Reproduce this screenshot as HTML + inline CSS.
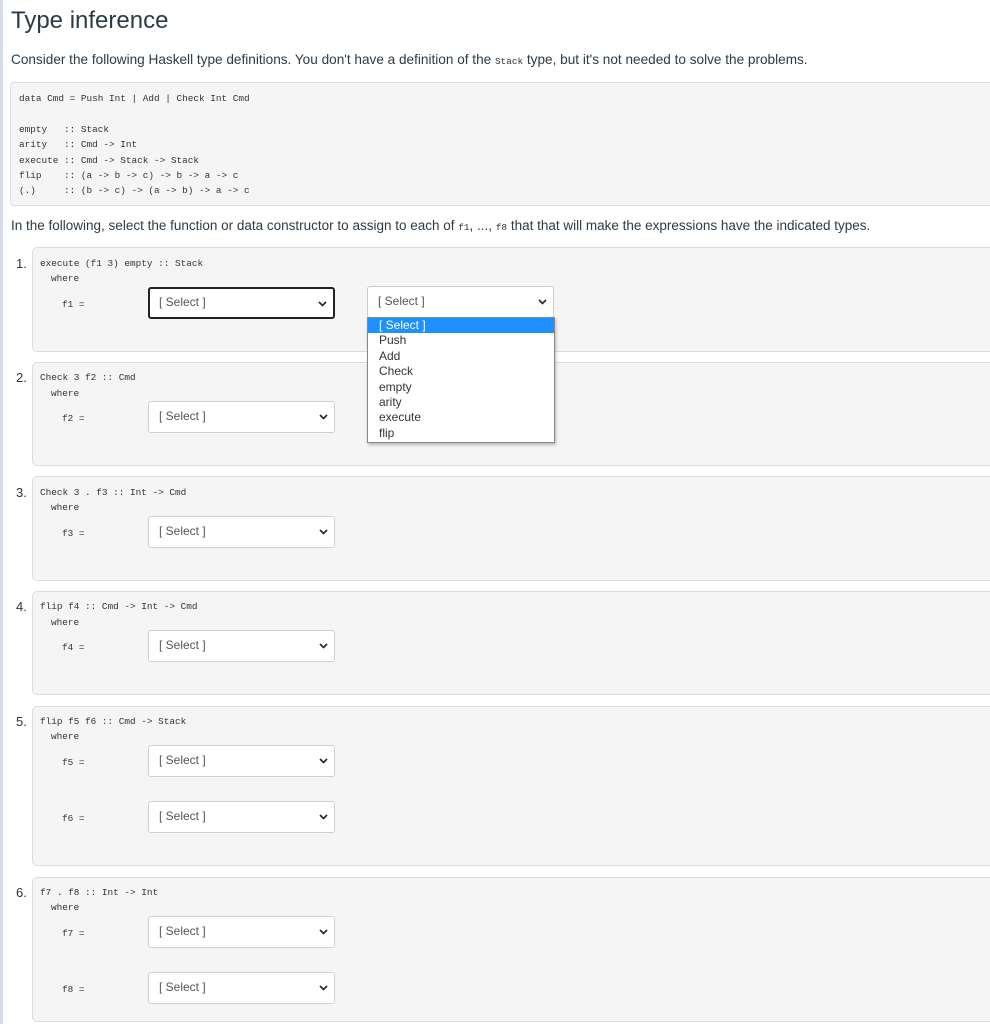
<!DOCTYPE html>
<html><head><meta charset="utf-8"><style>
*{margin:0;padding:0;box-sizing:border-box}
body{width:990px;height:1024px;background:#fff;position:relative;overflow:hidden;font-family:"Liberation Sans",sans-serif;color:#2d3b45}
.a{position:absolute;white-space:pre}
.bar{position:absolute;left:0;top:0;width:3px;height:1024px;background:#d3dae8}
.m{font-family:"Liberation Mono",monospace;font-size:9.4px;color:#333}
.box{position:absolute;left:32px;width:970px;background:#f5f5f5;border:1px solid #dcdcdc;border-radius:5px}
.sel{position:absolute;width:187px;height:32px;background:#fff;border:1px solid #d0d0d0;border-radius:3px;font-size:12px;color:#555;padding:7px 10px}
.sel svg{position:absolute;right:6px;top:12px}
.num{position:absolute;left:16px;font-size:13px;color:#333}
.dd{position:absolute;left:367px;top:317px;width:188px;height:126px;background:#fff;border:1px solid #888;box-shadow:1px 2px 3px rgba(0,0,0,.25);font-size:12px;color:#333}
.dd div{height:15.4px;line-height:15px;padding-left:11px}
</style></head><body>
<div class="bar"></div>
<div class="a" style="left:11px;top:7px;font-size:24px;color:#2d3b45">Type inference</div>
<div class="a" style="left:11px;top:52px;font-size:13.6px">Consider the following Haskell type definitions. You don't have a definition of the <span class="m">Stack</span> type, but it's not needed to solve the problems.</div>
<div style="position:absolute;left:10px;top:82px;width:990px;height:124px;background:#f5f5f5;border:1px solid #dcdcdc;border-radius:4px"></div>
<div class="a m" style="left:19px;top:91px;line-height:15.4px">data Cmd = Push Int | Add | Check Int Cmd

empty   :: Stack
arity   :: Cmd -> Int
execute :: Cmd -> Stack -> Stack
flip    :: (a -> b -> c) -> b -> a -> c
(.)     :: (b -> c) -> (a -> b) -> a -> c</div>
<div class="a" style="left:11px;top:218px;font-size:13.5px">In the following, select the function or data constructor to assign to each of <span class="m">f1</span>, ..., <span class="m">f8</span> that that will make the expressions have the indicated types.</div>

<div class="box" style="top:247px;height:105px"></div>
<div class="box" style="top:362px;height:104px"></div>
<div class="box" style="top:476px;height:105px"></div>
<div class="box" style="top:591px;height:104px"></div>
<div class="box" style="top:706px;height:160px"></div>
<div class="box" style="top:877px;height:145px"></div>

<div class="num" style="top:256px">1.</div>
<div class="a m" style="left:40px;top:258px">execute (f1 3) empty :: Stack</div>
<div class="a m" style="left:51px;top:273px">where</div>
<div class="a m" style="left:62px;top:299px">f1 =</div>
<div class="sel" style="left:148px;top:287px;border:2px solid #222;border-radius:3px;padding:6px 9px">[ Select ]<svg width="9" height="6" viewBox="0 0 9 6"><path d="M1 1l3.5 3.5L8 1" stroke="#222" stroke-width="1.6" fill="none"/></svg></div>
<div class="sel" style="left:367px;top:286px;border-color:#ccc">[ Select ]<svg width="9" height="6" viewBox="0 0 9 6"><path d="M1 1l3.5 3.5L8 1" stroke="#222" stroke-width="1.6" fill="none"/></svg></div>

<div class="num" style="top:370px">2.</div>
<div class="a m" style="left:40px;top:372px">Check 3 f2 :: Cmd</div>
<div class="a m" style="left:51px;top:388px">where</div>
<div class="a m" style="left:62px;top:413px">f2 =</div>
<div class="sel" style="left:148px;top:401px">[ Select ]<svg width="9" height="6" viewBox="0 0 9 6"><path d="M1 1l3.5 3.5L8 1" stroke="#222" stroke-width="1.6" fill="none"/></svg></div>

<div class="num" style="top:485px">3.</div>
<div class="a m" style="left:40px;top:487px">Check 3 . f3 :: Int -> Cmd</div>
<div class="a m" style="left:51px;top:502px">where</div>
<div class="a m" style="left:62px;top:528px">f3 =</div>
<div class="sel" style="left:148px;top:516px">[ Select ]<svg width="9" height="6" viewBox="0 0 9 6"><path d="M1 1l3.5 3.5L8 1" stroke="#222" stroke-width="1.6" fill="none"/></svg></div>

<div class="num" style="top:599px">4.</div>
<div class="a m" style="left:40px;top:601px">flip f4 :: Cmd -> Int -> Cmd</div>
<div class="a m" style="left:51px;top:617px">where</div>
<div class="a m" style="left:62px;top:642px">f4 =</div>
<div class="sel" style="left:148px;top:630px">[ Select ]<svg width="9" height="6" viewBox="0 0 9 6"><path d="M1 1l3.5 3.5L8 1" stroke="#222" stroke-width="1.6" fill="none"/></svg></div>

<div class="num" style="top:714px">5.</div>
<div class="a m" style="left:40px;top:716px">flip f5 f6 :: Cmd -> Stack</div>
<div class="a m" style="left:51px;top:731px">where</div>
<div class="a m" style="left:62px;top:757px">f5 =</div>
<div class="sel" style="left:148px;top:745px">[ Select ]<svg width="9" height="6" viewBox="0 0 9 6"><path d="M1 1l3.5 3.5L8 1" stroke="#222" stroke-width="1.6" fill="none"/></svg></div>
<div class="a m" style="left:62px;top:813px">f6 =</div>
<div class="sel" style="left:148px;top:801px">[ Select ]<svg width="9" height="6" viewBox="0 0 9 6"><path d="M1 1l3.5 3.5L8 1" stroke="#222" stroke-width="1.6" fill="none"/></svg></div>

<div class="num" style="top:885px">6.</div>
<div class="a m" style="left:40px;top:887px">f7 . f8 :: Int -> Int</div>
<div class="a m" style="left:51px;top:902px">where</div>
<div class="a m" style="left:62px;top:928px">f7 =</div>
<div class="sel" style="left:148px;top:916px">[ Select ]<svg width="9" height="6" viewBox="0 0 9 6"><path d="M1 1l3.5 3.5L8 1" stroke="#222" stroke-width="1.6" fill="none"/></svg></div>
<div class="a m" style="left:62px;top:984px">f8 =</div>
<div class="sel" style="left:148px;top:972px">[ Select ]<svg width="9" height="6" viewBox="0 0 9 6"><path d="M1 1l3.5 3.5L8 1" stroke="#222" stroke-width="1.6" fill="none"/></svg></div>

<div class="dd">
<div style="background:#1e90ff;color:#fff">[ Select ]</div>
<div>Push</div><div>Add</div><div>Check</div><div>empty</div><div>arity</div><div>execute</div><div>flip</div>
</div>
</body></html>
